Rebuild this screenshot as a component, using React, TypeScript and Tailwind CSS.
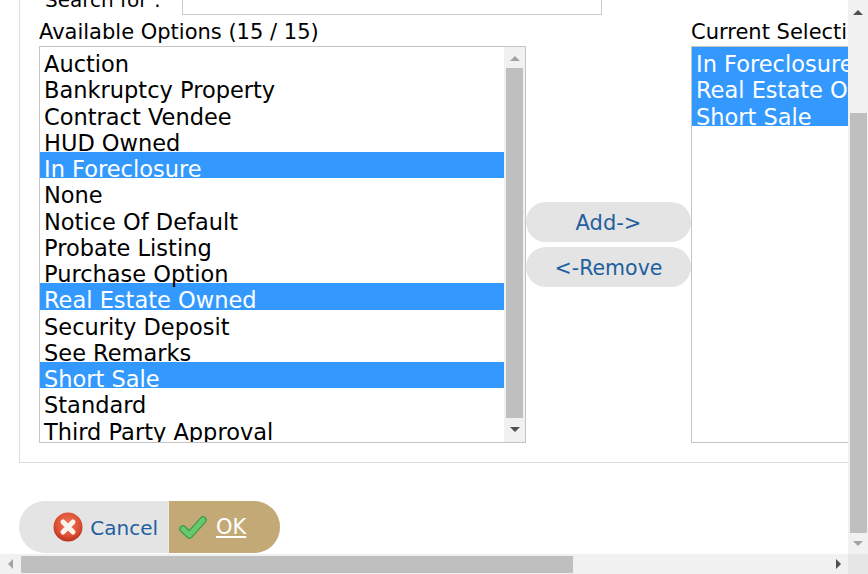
import type { ReactNode } from 'react'

const options = [
  { label: 'Auction' },
  { label: 'Bankruptcy Property' },
  { label: 'Contract Vendee' },
  { label: 'HUD Owned' },
  { label: 'In Foreclosure', selected: true },
  { label: 'None' },
  { label: 'Notice Of Default' },
  { label: 'Probate Listing' },
  { label: 'Purchase Option' },
  { label: 'Real Estate Owned', selected: true },
  { label: 'Security Deposit' },
  { label: 'See Remarks' },
  { label: 'Short Sale', selected: true },
  { label: 'Standard' },
  { label: 'Third Party Approval' },
]

const current = ['In Foreclosure', 'Real Estate Owned', 'Short Sale']

function Arrow({ dir, className }: { dir: 'up' | 'down' | 'left' | 'right'; className: string }) {
  const points = {
    up: '0,8 5,3 10,8',
    down: '0,2 5,7 10,2',
    left: '7,0 2,5 7,10',
    right: '3,0 8,5 3,10',
  }[dir]
  return (
    <svg viewBox="0 0 10 10" className={`h-[10px] w-[10px] ${className}`}>
      <polygon points={points} fill="currentColor" />
    </svg>
  )
}

function CancelIcon() {
  return (
    <svg viewBox="0 0 30 30" className="h-[30px] w-[30px] shrink-0">
      <defs>
        <radialGradient id="cancelFill" cx="50%" cy="40%" r="60%">
          <stop offset="0%" stopColor="#ee7a5c" />
          <stop offset="70%" stopColor="#dc4f33" />
          <stop offset="100%" stopColor="#b5301c" />
        </radialGradient>
      </defs>
      <circle cx="15" cy="15" r="14.5" fill="url(#cancelFill)" />
      <path d="M10 10 L20 20 M20 10 L10 20" stroke="#fdf3ee" strokeWidth="5" strokeLinecap="round" />
    </svg>
  )
}

function CheckIcon() {
  return (
    <svg viewBox="0 0 28 24" className="h-[24px] w-[28px] shrink-0">
      <path d="M4 14 L10.5 20 L24 5" fill="none" stroke="#3f9a4f" strokeWidth="7.5" strokeLinecap="round" strokeLinejoin="round" />
      <path d="M4 14 L10.5 20 L24 5" fill="none" stroke="#68c96c" strokeWidth="5" strokeLinecap="round" strokeLinejoin="round" />
    </svg>
  )
}

function ListBox({ children }: { children: ReactNode }) {
  return (
    <div className="flex h-[397px] border border-[#c4c4c4]">
      <ul className="min-w-0 flex-1 overflow-hidden text-[22.5px]">{children}</ul>
      <div className="flex w-[21px] flex-col items-center bg-[#f1f1f1]">
        <div className="flex h-[21px] items-center justify-center">
          <Arrow dir="up" className="text-[#a3a3a3]" />
        </div>
        <div className="w-[17px] flex-1 bg-[#bfbfbf]" />
        <div className="flex h-[24px] items-center justify-center">
          <Arrow dir="down" className="text-[#505050]" />
        </div>
      </div>
    </div>
  )
}

export default function App() {
  return (
    <div className="flex h-[574px] w-[868px] flex-col overflow-hidden bg-white font-['DejaVu_Sans',sans-serif] text-[21px] text-black">
      <div className="flex min-h-0 flex-1">
        <main className="min-w-0 flex-1 overflow-hidden">
          <div className="ml-[19px] h-[463px] w-[900px] border-b border-l border-[#dddddd] pl-[19px]">
            <div className="flex h-[15px] items-end overflow-hidden pl-[6px]">
              <span className="mb-[5px] text-[20px] leading-none">Search for :</span>
              <div className="ml-[21px] h-[15px] w-[420px] shrink-0 border border-t-0 border-[#cccccc]" />
            </div>
            <div className="flex">
              <div className="w-[487px] shrink-0">
                <div className="h-[31px] pt-[4px] leading-[26px]">Available Options (15 / 15)</div>
                <ListBox>
                  {options.map((o) => (
                    <li
                      key={o.label}
                      className={`h-[26.25px] pl-[4px] leading-[34px] ${o.selected ? 'bg-[#3399ff] text-white' : ''}`}
                    >
                      {o.label}
                    </li>
                  ))}
                </ListBox>
              </div>
              <div className="flex w-[165px] shrink-0 flex-col gap-[5px] pt-[187px]">
                <button className="h-[40px] rounded-[20px] bg-[#e4e4e4] pt-[3px] text-[#1f5f9f]">Add-&gt;</button>
                <button className="h-[40px] rounded-[20px] bg-[#e4e4e4] pt-[3px] text-[20.5px] text-[#1f5f9f]">&lt;-Remove</button>
              </div>
              <div className="w-[300px] shrink-0">
                <div className="h-[31px] pt-[4px] leading-[26px]">Current Selection</div>
                <ul className="h-[397px] overflow-hidden border border-[#c4c4c4] text-[22.5px]">
                  {current.map((label) => (
                    <li key={label} className="h-[26.25px] bg-[#3399ff] pl-[4px] leading-[34px] text-white">
                      {label}
                    </li>
                  ))}
                </ul>
              </div>
            </div>
          </div>
          <div className="ml-[19px] mt-[38px] flex h-[52px] w-[261px] overflow-hidden rounded-[26px] bg-[#e4e4e4]">
            <button className="flex w-[150px] items-center justify-end gap-[7px] border-r border-[#f0ead8] pr-[10px] text-[20px] text-[#1f5f9f]">
              <CancelIcon />
              <span className="pt-[2px]">Cancel</span>
            </button>
            <button className="flex flex-1 items-center gap-[9px] bg-[#c3a976] pl-[10px] text-white">
              <CheckIcon />
              <span className="pt-[2px] underline">OK</span>
            </button>
          </div>
        </main>
        <div className="flex w-[20px] flex-col items-center bg-[#f1f1f1]">
          <div className="flex h-[113px] items-start justify-center pt-[7px]">
            <Arrow dir="up" className="text-[#505050]" />
          </div>
          <div className="w-[17px] flex-1 bg-[#bfbfbf]" />
          <div className="flex h-[21px] items-center justify-center">
            <Arrow dir="down" className="text-[#a3a3a3]" />
          </div>
        </div>
      </div>
      <div className="flex h-[20px] items-center bg-[#f1f1f1]">
        <div className="flex w-[21px] items-center justify-center">
          <Arrow dir="left" className="text-[#a3a3a3]" />
        </div>
        <div className="h-[17px] w-[552px] bg-[#bfbfbf]" />
        <div className="flex-1" />
        <div className="flex w-[20px] items-center justify-center">
          <Arrow dir="right" className="text-[#505050]" />
        </div>
        <div className="h-[20px] w-[20px] bg-[#e6e6e6]" />
      </div>
    </div>
  )
}
